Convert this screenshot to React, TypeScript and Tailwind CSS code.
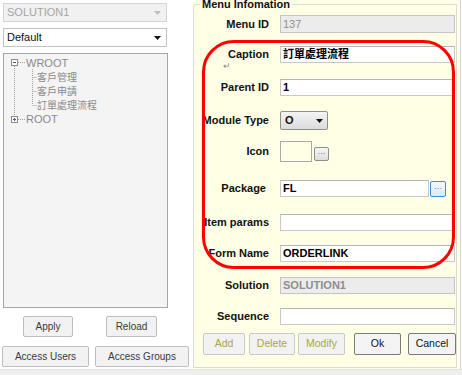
import React from "react";

const font = "font-['Liberation_Sans','Noto_Sans_CJK_TC',sans-serif]";

function Caret({ color = "#111" }: { color?: string }) {
  return (
    <svg width="7" height="4" viewBox="0 0 7 4">
      <path d="M0 0 H7 L3.5 4 Z" fill={color} />
    </svg>
  );
}

function Row({
  label,
  className,
  labelClass = "",
  children,
}: {
  label: string;
  className: string;
  labelClass?: string;
  children: React.ReactNode;
}) {
  return (
    <div className={`flex items-center ${className}`}>
      <div className={`w-[75px] shrink-0 text-right text-[11px] font-bold text-[#111] leading-none ${labelClass}`}>
        {label}
      </div>
      <div className="ml-[11px] flex items-center">{children}</div>
    </div>
  );
}

const fieldBase =
  "h-[17px] bg-white border border-[#c8c8c8] border-t-[#b4b4b4] flex items-center pl-[2px] text-[11px] leading-none";
const inputCls = "w-[175px] " + fieldBase;
const disabledCls =
  "w-[175px] bg-[#ececec] border border-[#c4c4c4] flex items-center pl-[2px] text-[11px] leading-none text-[#8e8e8e]";

export default function App() {
  return (
    <div className={`w-[462px] h-[375px] bg-white flex flex-col overflow-hidden relative ${font}`}>
      <div className="flex h-[369px]">
        {/* left column */}
        <div className="w-[193px] flex flex-col pt-[3px]">
          <div className="ml-[3px] w-[164px] h-[19px] bg-[#f1f1f1] border border-[#d4d4d4] flex items-center justify-between px-[3px]">
            <span className="text-[11px] text-[#a4a4a4]">SOLUTION1</span>
            <span className="mr-[2px]">
              <Caret color="#bdbdbd" />
            </span>
          </div>
          <div className="ml-[3px] mt-[6px] w-[164px] h-[19px] bg-white border border-[#c2c2c2] flex items-center justify-between px-[3px]">
            <span className="text-[11px] text-[#111]">Default</span>
            <span className="mr-[2px]">
              <Caret />
            </span>
          </div>

          <div className="ml-[3px] mt-[6px] w-[165px] h-[255px] bg-[#f4f4f4] border border-[#a6a6a6] relative pt-[2px] text-[#8a8a8a]">
            <svg className="absolute left-0 top-0" width="40" height="80" viewBox="0 0 40 80">
              <g stroke="#a0a0a0" strokeDasharray="1 1" fill="none">
                <line x1="10.5" y1="12" x2="10.5" y2="62" />
                <line x1="14" y1="8.5" x2="21" y2="8.5" />
                <line x1="14" y1="65.5" x2="21" y2="65.5" />
                <line x1="28.5" y1="15" x2="28.5" y2="51" />
                <line x1="28.5" y1="23.5" x2="33" y2="23.5" />
                <line x1="28.5" y1="37.5" x2="33" y2="37.5" />
                <line x1="28.5" y1="51.5" x2="33" y2="51.5" />
              </g>
              <rect x="7.5" y="5.5" width="6" height="6" fill="#fff" stroke="#8c8c8c" />
              <line x1="9" y1="8.5" x2="12" y2="8.5" stroke="#3b5fa0" />
              <rect x="7.5" y="62.5" width="6" height="6" fill="#fff" stroke="#8c8c8c" />
              <line x1="9" y1="65.5" x2="12" y2="65.5" stroke="#3b5fa0" />
              <line x1="10.5" y1="64" x2="10.5" y2="67" stroke="#3b5fa0" />
            </svg>
            <div className="h-[14px] pl-[22px] flex items-center text-[11px]">WROOT</div>
            <div className="h-[14px] pl-[33px] flex items-center text-[10px]">客戶管理</div>
            <div className="h-[14px] pl-[33px] flex items-center text-[10px]">客戶申請</div>
            <div className="h-[14px] pl-[33px] flex items-center text-[10px]">訂單處理流程</div>
            <div className="h-[14px] pl-[22px] flex items-center text-[11px]">ROOT</div>
          </div>

          <div className="mt-[8px] flex h-[21px]">
            <button className="ml-[23px] w-[50px] h-[21px] bg-[#f2f2f2] border border-[#bdbdbd] rounded-[2px] text-[10px] text-[#3a3a3a]">
              Apply
            </button>
            <button className="ml-[33px] w-[51px] h-[21px] bg-[#f2f2f2] border border-[#bdbdbd] rounded-[2px] text-[10px] text-[#3a3a3a]">
              Reload
            </button>
          </div>
          <div className="mt-[9px] flex h-[21px]">
            <button className="ml-[2px] w-[87px] h-[21px] bg-[#f2f2f2] border border-[#bdbdbd] rounded-[2px] text-[10px] text-[#3a3a3a]">
              Access Users
            </button>
            <button className="ml-[6px] w-[94px] h-[21px] bg-[#f2f2f2] border border-[#bdbdbd] rounded-[2px] text-[10px] text-[#3a3a3a]">
              Access Groups
            </button>
          </div>
        </div>

        {/* right panel */}
        <div className="w-[268px] h-[369px] bg-[#ffffe6] border-r border-[#d2d2d2] pr-[3px]">
          <div className="relative mt-[4px] w-[264px] h-[364px] border border-[#dadada] rounded-tl-[3px] flex flex-col pt-[10px]">
            <span className="absolute left-[6px] top-[-7px] px-[2px] bg-[#ffffe6] text-[11px] font-bold text-[#111] leading-[13px]">
              Menu Infomation
            </span>

            <Row label="Menu ID" className="h-[18px]">
              <div className={disabledCls + " h-[18px]"}>137</div>
            </Row>
            <Row label="Caption" className="relative mt-[13px] h-[17px]">
              <div className={inputCls + " font-bold text-[10px]"}>訂單處理流程</div>
              <span className="absolute left-[29px] top-[16px] text-[9px] text-[#8a8a8a] leading-none">↵</span>
            </Row>
            <Row label="Parent ID" className="mt-[16px] h-[17px]">
              <div className={inputCls + " font-bold"}>1</div>
            </Row>
            <Row label="Module Type" className="mt-[15px] h-[19px]">
              <div className="w-[48px] h-[19px] bg-gradient-to-b from-[#f4f4f4] to-[#dcdcdc] border border-[#8f8f8f] rounded-[2px] flex items-center justify-between pl-[4px] pr-[4px]">
                <span className="text-[11px] font-bold text-[#111]">O</span>
                <Caret />
              </div>
            </Row>
            <Row label="Icon" className="mt-[11px] h-[21px]">
              <div className="w-[32px] h-[21px] bg-[#ffffe6] border border-[#a8a8a8]" />
              <div className="ml-[2px] mt-[5px] w-[15px] h-[14px] bg-gradient-to-b from-[#f6f6f6] to-[#dedede] border border-[#8e8e8e] rounded-[2px] flex items-center justify-center text-[8px] leading-none text-[#444]">
                ···
              </div>
            </Row>
            <Row label="Package" labelClass="pr-[3px]" className="mt-[18px] h-[17px]">
              <div className={"w-[149px] font-bold " + fieldBase}>FL</div>
              <div className="ml-[1px] w-[16px] h-[16px] bg-gradient-to-b from-[#f4f9fd] to-[#d9ebf8] border border-[#3c8fd6] rounded-[2px] flex items-center justify-center text-[8px] leading-none text-[#444]">
                ···
              </div>
            </Row>
            <Row label="Item params" className="mt-[17px] h-[17px]">
              <div className={inputCls} />
            </Row>
            <Row label="Form Name" className="mt-[14px] h-[17px]">
              <div className={inputCls + " font-bold"}>ORDERLINK</div>
            </Row>
            <Row label="Solution" className="mt-[15px] h-[17px]">
              <div className={disabledCls + " h-[17px] font-bold"}>SOLUTION1</div>
            </Row>
            <Row label="Sequence" className="mt-[14px] h-[17px]">
              <div className={inputCls} />
            </Row>

            <div className="mt-[8px] ml-[9px] flex h-[22px] text-[10.5px]">
              <button className="w-[42px] h-[22px] bg-[#f2f2f2] border border-[#c8c8c8] rounded-[2px] text-[#a8a83c]">
                Add
              </button>
              <button className="ml-[4px] w-[46px] h-[22px] bg-[#f2f2f2] border border-[#c8c8c8] rounded-[2px] text-[#a8a83c]">
                Delete
              </button>
              <button className="ml-[3px] w-[47px] h-[22px] bg-[#f2f2f2] border border-[#c8c8c8] rounded-[2px] text-[#a8a83c]">
                Modify
              </button>
              <button className="ml-[9px] w-[47px] h-[22px] bg-[#f4f4f4] border border-[#7a7a7a] rounded-[2px] text-[#111]">
                Ok
              </button>
              <button className="ml-[7px] w-[48px] h-[22px] bg-[#f4f4f4] border border-[#7a7a7a] rounded-[2px] text-[#111]">
                Cancel
              </button>
            </div>
          </div>
        </div>
      </div>
      <div className="h-[6px] bg-[#efefef] border-t border-[#e2e2e2]" />

      {/* red highlight */}
      <div className="absolute left-[202px] top-[40px] w-[253px] h-[229px] border-[3px] border-[#ff0000] rounded-[32px] pointer-events-none" />
    </div>
  );
}
